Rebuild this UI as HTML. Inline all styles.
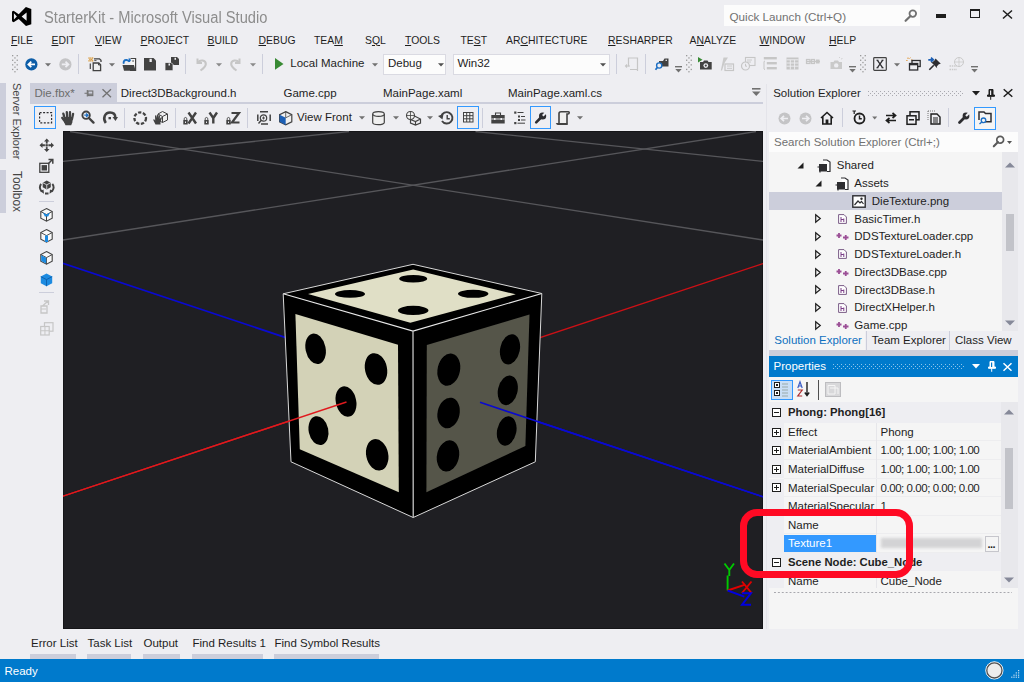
<!DOCTYPE html>
<html><head><meta charset="utf-8">
<style>
*{margin:0;padding:0;box-sizing:border-box}
html,body{width:1024px;height:682px;overflow:hidden;background:#EEEEF2;font-family:"Liberation Sans",sans-serif;color:#1E1E1E}
.a{position:absolute}
.t{position:absolute;white-space:nowrap;line-height:1}
.menu .t{font-size:10.4px;top:35.5px;color:#1E1E1E}
.menu u{text-decoration:underline;text-underline-offset:1.3px;text-decoration-thickness:1px}
.sep{position:absolute;width:1px;background:#CCCEDB}
.ui{font-size:11.5px}
svg{position:absolute;overflow:visible}
</style></head><body>

<!-- TITLE BAR -->
<svg style="left:8px;top:4px" width="28" height="26" viewBox="8 4 28 26"><path d="M25.9 7 L31.3 9 L31.3 24.2 L26 26.1 L18.7 18.9 L13.6 22.2 L12 21.3 L12 11.6 L13.6 10.7 L18.7 14.3 Z M13.9 13.3 L13.9 19.5 L16.9 16.4 Z M26.6 12.6 L21.6 16.6 L26.6 20.8 Z" fill="#000" fill-rule="evenodd"/></svg>
<div class="t" style="left:43.6px;top:9.5px;font-size:15.8px;color:#8D8D8D;transform:scaleX(0.93);transform-origin:0 0">StarterKit - Microsoft Visual Studio</div>

<div class="a" style="left:724px;top:5px;width:196px;height:21px;background:#FCFCFC"></div>
<div class="t" style="left:729.5px;top:11px;font-size:11.7px;color:#717171">Quick Launch (Ctrl+Q)</div>
<svg style="left:904px;top:9px" width="14" height="13" viewBox="0 0 14 13"><circle cx="8.8" cy="4.6" r="3.3" fill="none" stroke="#717171" stroke-width="1.8"/><path d="M6.5 7 L1.6 11.8" stroke="#717171" stroke-width="2.2" stroke-linecap="round"/></svg>
<div class="a" style="left:936px;top:14px;width:10px;height:3.5px;background:#1E1E1E"></div>
<div class="a" style="left:970px;top:8.5px;width:9.5px;height:9.5px;border:1.3px solid #1E1E1E;border-top-width:2.6px"></div>
<svg style="left:1002px;top:9.5px" width="11" height="9" viewBox="0 0 11 9"><path d="M1 0.5 L10 8.5 M10 0.5 L1 8.5" stroke="#1E1E1E" stroke-width="1.5"/></svg>

<!-- MENU -->
<div class="menu">
<div class="t" style="left:11px"><u>F</u>ILE</div>
<div class="t" style="left:51.5px"><u>E</u>DIT</div>
<div class="t" style="left:95px"><u>V</u>IEW</div>
<div class="t" style="left:140.5px"><u>P</u>ROJECT</div>
<div class="t" style="left:207.5px"><u>B</u>UILD</div>
<div class="t" style="left:258.5px"><u>D</u>EBUG</div>
<div class="t" style="left:314px">TEA<u>M</u></div>
<div class="t" style="left:365px">S<u>Q</u>L</div>
<div class="t" style="left:405px"><u>T</u>OOLS</div>
<div class="t" style="left:460.5px">TE<u>S</u>T</div>
<div class="t" style="left:506px">AR<u>C</u>HITECTURE</div>
<div class="t" style="left:608px"><u>R</u>ESHARPER</div>
<div class="t" style="left:689.5px">A<u>N</u>ALYZE</div>
<div class="t" style="left:759.5px"><u>W</u>INDOW</div>
<div class="t" style="left:829px"><u>H</u>ELP</div>
</div>

<!-- TOOLBAR ROW -->

<!-- DOC TABS -->
<div class="a" style="left:30px;top:83px;width:87px;height:19px;background:#CCCEDB"></div>
<div class="a" style="left:30px;top:102px;width:733px;height:2px;background:#CCCEDB"></div>
<div class="t ui" style="left:34.5px;top:87.5px;color:#6D6D6D">Die.fbx*</div>
<div class="t ui" style="left:120.8px;top:87.5px">Direct3DBackground.h</div>
<div class="t ui" style="left:283.5px;top:87.5px">Game.cpp</div>
<div class="t ui" style="left:383px;top:87.5px">MainPage.xaml</div>
<div class="t ui" style="left:508px;top:87.5px">MainPage.xaml.cs</div>

<!-- LEFT STRIP -->
<div class="a" style="left:0;top:83px;width:6px;height:76px;background:#CCCEDB"></div>
<div class="a" style="left:0;top:170px;width:6px;height:42.5px;background:#CCCEDB"></div>


<svg style="left:11.5px;top:54.5px" width="6" height="18" viewBox="0 0 6 18"><rect x="0" y="0.0" width="1.3" height="1.3" fill="#9A9A9A"/><rect x="4.6" y="0.0" width="1.3" height="1.3" fill="#9A9A9A"/><rect x="2.3" y="2.3" width="1.3" height="1.3" fill="#9A9A9A"/><rect x="0" y="4.6" width="1.3" height="1.3" fill="#9A9A9A"/><rect x="4.6" y="4.6" width="1.3" height="1.3" fill="#9A9A9A"/><rect x="2.3" y="6.9" width="1.3" height="1.3" fill="#9A9A9A"/><rect x="0" y="9.2" width="1.3" height="1.3" fill="#9A9A9A"/><rect x="4.6" y="9.2" width="1.3" height="1.3" fill="#9A9A9A"/><rect x="2.3" y="11.5" width="1.3" height="1.3" fill="#9A9A9A"/><rect x="0" y="13.8" width="1.3" height="1.3" fill="#9A9A9A"/><rect x="4.6" y="13.8" width="1.3" height="1.3" fill="#9A9A9A"/><rect x="2.3" y="16.1" width="1.3" height="1.3" fill="#9A9A9A"/></svg>
<svg style="left:25px;top:57.5px" width="13" height="13" viewBox="0 0 13 13"><circle cx="6.4" cy="6.4" r="6.1" fill="#0E5EA8"/><path d="M10 6.4 L3.6 6.4 M6.3 3.6 L3.4 6.4 L6.3 9.2" stroke="#fff" stroke-width="1.8" fill="none"/></svg>
<svg style="left:45px;top:62.7px" width="6" height="4" viewBox="0 0 6 4"><path d="M0 0.3 L6 0.3 L3 3.5Z" fill="#717171"/></svg>
<svg style="left:58.8px;top:57.6px" width="13" height="13" viewBox="0 0 13 13"><circle cx="6.4" cy="6.4" r="6.1" fill="#C4C4C6"/><path d="M2.8 6.4 L9.2 6.4 M6.5 3.6 L9.4 6.4 L6.5 9.2" stroke="#EEEEF2" stroke-width="1.8" fill="none"/></svg>
<div class="a" style="left:78.3px;top:54px;width:1px;height:19.5px;background:#CCCEDB"></div>
<svg style="left:87.5px;top:56.5px" width="15" height="15" viewBox="0 0 15 15"><g fill="#D8952F"><rect x="0.4" y="0.4" width="1.3" height="1.3"/><rect x="2.2" y="0.4" width="1.3" height="1.3"/><rect x="4" y="0.4" width="1.3" height="1.3"/><rect x="1.3" y="1.8" width="1.3" height="1.3"/><rect x="3.1" y="1.8" width="1.3" height="1.3"/><rect x="0.4" y="3.2" width="1.3" height="1.3"/><rect x="2.2" y="3.2" width="1.3" height="1.3"/><rect x="4" y="3.2" width="1.3" height="1.3"/></g><path d="M6 1.8 L11.5 1.8 L13 3.3 L13 5" fill="none" stroke="#424242" stroke-width="1.3"/><path d="M6.3 3.6 L8.5 3.6" stroke="#424242" stroke-width="0.9"/><path d="M2.3 6.5 L2.3 12" stroke="#424242" stroke-width="1.2"/><path d="M5.2 6 L10.8 6 L12.6 7.8 L12.6 13.7 L5.2 13.7 Z" fill="#F0F0F0" stroke="#424242" stroke-width="1.3"/><path d="M10.5 6 L10.5 8 L12.6 8" fill="none" stroke="#424242" stroke-width="1"/></svg>
<svg style="left:109px;top:62.8px" width="6" height="4" viewBox="0 0 6 4"><path d="M0 0.3 L6 0.3 L3 3.5Z" fill="#717171"/></svg>
<svg style="left:121.5px;top:56.5px" width="15" height="15" viewBox="0 0 15 15"><path d="M8.5 1.5 L13.6 1.5 L13.6 13.5 L8 13.5" fill="#F5F5F5" stroke="#424242" stroke-width="1.2"/><path d="M10.2 4 L12 4" stroke="#424242" stroke-width="1"/><path d="M0.5 8 L12 8 L13.6 13.7 L2 13.7 Z" fill="#424242"/><path d="M1.8 6.8 C1.2 4.5 2.2 2.8 4.5 3 C6 3.1 6.3 4.5 8 3.8" fill="none" stroke="#1C6FC4" stroke-width="1.9"/><path d="M6.8 0.8 L9.3 3.2 L6.3 5.2 Z" fill="#1C6FC4"/></svg>
<svg style="left:144px;top:57.5px" width="12" height="13" viewBox="0 0 12 13"><path d="M0 0 L9.5 0 L12 2.5 L12 12.5 L0 12.5Z" fill="#424242"/><rect x="5.5" y="0.8" width="2.3" height="3.2" fill="#EEEEF2"/></svg>
<svg style="left:164.8px;top:56.8px" width="14" height="14" viewBox="0 0 14 14"><path d="M6 0 L12 0 L14 2 L14 8 L6 8Z" fill="#424242"/><rect x="9.5" y="0.8" width="1.5" height="2" fill="#EEEEF2"/><path d="M0 5.5 L6 5.5 L8 7.5 L8 13.7 L0 13.7Z" fill="#424242" stroke="#EEEEF2" stroke-width="0.8"/><rect x="3.5" y="6.5" width="1.5" height="2" fill="#EEEEF2"/></svg>
<div class="a" style="left:185.3px;top:54px;width:1px;height:19.5px;background:#CCCEDB"></div>
<svg style="left:195px;top:57px" width="12" height="14" viewBox="0 0 12 14"><path d="M2.5 1.5 L2.5 6 L7 6" fill="none" stroke="#C6C6C6" stroke-width="2"/><path d="M2.8 5.5 C5 2.5 10.8 2.8 10.8 7 C10.8 9.5 8.5 11.5 5.5 13.5" fill="none" stroke="#C6C6C6" stroke-width="2.1"/></svg>
<svg style="left:216px;top:62.8px" width="6" height="4" viewBox="0 0 6 4"><path d="M0 0.3 L6 0.3 L3 3.5Z" fill="#8A8A8A"/></svg>
<svg style="left:229.5px;top:57px" width="12" height="14" viewBox="0 0 12 14"><path d="M9.5 1.5 L9.5 6 L5 6" fill="none" stroke="#C6C6C6" stroke-width="2"/><path d="M9.2 5.5 C7 2.5 1.2 2.8 1.2 7 C1.2 9.5 3.5 11.5 6.5 13.5" fill="none" stroke="#C6C6C6" stroke-width="2.1"/></svg>
<svg style="left:250.3px;top:62.8px" width="6" height="4" viewBox="0 0 6 4"><path d="M0 0.3 L6 0.3 L3 3.5Z" fill="#8A8A8A"/></svg>
<div class="a" style="left:262.1px;top:54px;width:1px;height:19.5px;background:#CCCEDB"></div>
<svg style="left:274.5px;top:57.6px" width="9" height="12" viewBox="0 0 9 12"><path d="M0 0 L8.5 5.9 L0 11.8Z" fill="#388A34"/></svg>
<div class="t ui" style="left:290.3px;top:57.5px">Local Machine</div>
<svg style="left:372.3px;top:62.8px" width="6" height="4" viewBox="0 0 6 4"><path d="M0 0.3 L6 0.3 L3 3.5Z" fill="#717171"/></svg>
<div class="a" style="left:383.4px;top:53.5px;width:63.1px;height:21px;background:#FCFCFC;border:1px solid #DADAE2"></div>
<div class="t ui" style="left:388px;top:57.5px">Debug</div>
<svg style="left:437.7px;top:62.8px" width="6" height="4" viewBox="0 0 6 4"><path d="M0 0.3 L6 0.3 L3 3.5Z" fill="#505050"/></svg>
<div class="a" style="left:452.9px;top:53.5px;width:157px;height:21px;background:#FCFCFC;border:1px solid #DADAE2"></div>
<div class="t ui" style="left:457.4px;top:57.5px">Win32</div>
<svg style="left:600.4px;top:62.8px" width="6" height="4" viewBox="0 0 6 4"><path d="M0 0.3 L6 0.3 L3 3.5Z" fill="#505050"/></svg>
<div class="a" style="left:615.9px;top:54px;width:1px;height:19.5px;background:#CCCEDB"></div>
<svg style="left:624.5px;top:56.5px" width="14" height="15" viewBox="0 0 14 15"><path d="M3.5 9.5 L3.5 1 L12.5 1 L12.5 14" fill="none" stroke="#C6C6C6" stroke-width="1.2"/><path d="M0.5 9 L5 9 M2 7.5 L0.5 9 L2 10.5 M5 12.5 L13 12.5" stroke="#C6C6C6" stroke-width="1.1" fill="none"/></svg>
<div class="a" style="left:645.1px;top:54px;width:1px;height:19.5px;background:#CCCEDB"></div>
<svg style="left:654.5px;top:56.5px" width="14" height="14" viewBox="0 0 14 14"><path d="M4 4 L8 4 L9.5 1.5 L13.5 1.5 L13.5 9.5 L4 9.5Z" fill="#424242"/><rect x="10.5" y="2.7" width="1.5" height="1.2" fill="#EEEEF2"/><circle cx="4.2" cy="8.5" r="2.6" fill="#EEEEF2" stroke="#1C6FC4" stroke-width="1.4"/><path d="M2.5 10.3 L0.5 12.8" stroke="#1C6FC4" stroke-width="1.8"/></svg>
<svg style="left:675.2px;top:65.6px" width="7" height="7" viewBox="0 0 7 7"><rect x="0" y="0" width="7" height="1.4" fill="#717171"/><path d="M0.3 3 L6.7 3 L3.5 6.5Z" fill="#717171"/></svg>
<svg style="left:686px;top:54.5px" width="6" height="18" viewBox="0 0 6 18"><rect x="0" y="0.0" width="1.3" height="1.3" fill="#9A9A9A"/><rect x="4.6" y="0.0" width="1.3" height="1.3" fill="#9A9A9A"/><rect x="2.3" y="2.3" width="1.3" height="1.3" fill="#9A9A9A"/><rect x="0" y="4.6" width="1.3" height="1.3" fill="#9A9A9A"/><rect x="4.6" y="4.6" width="1.3" height="1.3" fill="#9A9A9A"/><rect x="2.3" y="6.9" width="1.3" height="1.3" fill="#9A9A9A"/><rect x="0" y="9.2" width="1.3" height="1.3" fill="#9A9A9A"/><rect x="4.6" y="9.2" width="1.3" height="1.3" fill="#9A9A9A"/><rect x="2.3" y="11.5" width="1.3" height="1.3" fill="#9A9A9A"/><rect x="0" y="13.8" width="1.3" height="1.3" fill="#9A9A9A"/><rect x="4.6" y="13.8" width="1.3" height="1.3" fill="#9A9A9A"/><rect x="2.3" y="16.1" width="1.3" height="1.3" fill="#9A9A9A"/></svg>
<svg style="left:697.5px;top:56.5px" width="14" height="14" viewBox="0 0 14 14"><path d="M0 0 L4.5 2.8 L0 5.6Z" fill="#388A34"/><path d="M2 5 L5 5 L6 3.5 L9.5 3.5 L10.5 5 L13.7 5 L13.7 12.5 L2 12.5Z" fill="#424242"/><circle cx="7.8" cy="8.6" r="2.4" fill="#EEEEF2"/><circle cx="7.8" cy="8.6" r="1.1" fill="#424242"/></svg>
<svg style="left:720px;top:56.5px" width="14" height="14" viewBox="0 0 14 14"><path d="M3.5 0.5 L8 0.5 L4.5 6 L2 13.5 L0.8 13.5 Z" fill="#CACACA"/><rect x="5" y="7" width="8.5" height="6.5" fill="none" stroke="#C6C6C6" stroke-width="1.2"/><path d="M7 9 L12 9 M7 11.3 L12 11.3" stroke="#C6C6C6" stroke-width="0.9"/></svg>
<svg style="left:740.6px;top:56.5px" width="15" height="14" viewBox="0 0 15 14"><rect x="4.5" y="0.5" width="9.5" height="8" fill="#EEEEF2" stroke="#C6C6C6" stroke-width="1.1"/><path d="M6 3 L11 3 M6 5 L10 5" stroke="#C6C6C6" stroke-width="0.9"/><circle cx="4.5" cy="9" r="4" fill="#EEEEF2" stroke="#C6C6C6" stroke-width="1.2"/><path d="M4.5 6.8 L4.5 9.2 L6 9.2" stroke="#C6C6C6" stroke-width="1" fill="none"/></svg>
<svg style="left:763px;top:56.5px" width="14" height="14" viewBox="0 0 14 14"><rect x="0.8" y="0" width="13" height="2.4" fill="#C6C6C6"/><rect x="3.8" y="5" width="10" height="2.4" fill="#C6C6C6"/><rect x="3.8" y="10" width="10" height="2.4" fill="#C6C6C6"/><path d="M2 4 L1 4.5 L1 12 L2 12.7" stroke="#C6C6C6" stroke-width="1" fill="none"/></svg>
<svg style="left:785.5px;top:57px" width="13" height="13" viewBox="0 0 13 13"><rect x="0.5" y="0.5" width="12" height="12" fill="#C6C6C6"/><path d="M0.5 2.8 L12.5 2.8 M0.5 6 L12.5 6 M0.5 9.2 L12.5 9.2 M4.3 2.8 L4.3 12.5 M8.6 2.8 L8.6 12.5" stroke="#EEEEF2" stroke-width="0.9"/></svg>
<svg style="left:806px;top:59px" width="14" height="5" viewBox="0 0 14 5"><path d="M0 2.5 L14 2.5" stroke="#C6C6C6" stroke-width="1.4"/><rect x="0.5" y="0.5" width="3.5" height="4" fill="none" stroke="#C6C6C6" stroke-width="1.2"/><rect x="5.5" y="0.5" width="3" height="4" fill="none" stroke="#C6C6C6" stroke-width="1.2"/><rect x="10" y="0.5" width="3.5" height="4" fill="#C6C6C6"/></svg>
<svg style="left:829.5px;top:57px" width="13" height="13" viewBox="0 0 13 13"><path d="M0.5 5 L3.5 5 L4.5 3.5 L8 3.5 L9 5 L12 5 L12 12 L0.5 12Z" fill="#CACACA"/><circle cx="6.2" cy="8.4" r="2.2" fill="#EEEEF2"/><path d="M9 1 L10 0 M11 2 L12.5 1.5" stroke="#CACACA" stroke-width="0.8"/></svg>
<svg style="left:849px;top:66px" width="7" height="7" viewBox="0 0 7 7"><rect x="0" y="0" width="7" height="1.4" fill="#717171"/><path d="M0.3 3 L6.7 3 L3.5 6.5Z" fill="#717171"/></svg>
<svg style="left:860px;top:54.5px" width="6" height="18" viewBox="0 0 6 18"><rect x="0" y="0.0" width="1.3" height="1.3" fill="#9A9A9A"/><rect x="4.6" y="0.0" width="1.3" height="1.3" fill="#9A9A9A"/><rect x="2.3" y="2.3" width="1.3" height="1.3" fill="#9A9A9A"/><rect x="0" y="4.6" width="1.3" height="1.3" fill="#9A9A9A"/><rect x="4.6" y="4.6" width="1.3" height="1.3" fill="#9A9A9A"/><rect x="2.3" y="6.9" width="1.3" height="1.3" fill="#9A9A9A"/><rect x="0" y="9.2" width="1.3" height="1.3" fill="#9A9A9A"/><rect x="4.6" y="9.2" width="1.3" height="1.3" fill="#9A9A9A"/><rect x="2.3" y="11.5" width="1.3" height="1.3" fill="#9A9A9A"/><rect x="0" y="13.8" width="1.3" height="1.3" fill="#9A9A9A"/><rect x="4.6" y="13.8" width="1.3" height="1.3" fill="#9A9A9A"/><rect x="2.3" y="16.1" width="1.3" height="1.3" fill="#9A9A9A"/></svg>
<svg style="left:872.8px;top:56.8px" width="14" height="14" viewBox="0 0 14 14"><rect x="0.7" y="0.7" width="12.6" height="12.6" rx="0.8" fill="none" stroke="#424242" stroke-width="1.2"/><path d="M4.3 3.2 L9.7 10.8 M9.7 3.2 L4.3 10.8" stroke="#2D2D30" stroke-width="1.3"/><path d="M3.3 3.2 L5.5 3.2 M8.5 3.2 L10.7 3.2 M3.3 10.8 L5.5 10.8 M8.5 10.8 L10.7 10.8" stroke="#2D2D30" stroke-width="0.8"/></svg>
<svg style="left:893.9px;top:63px" width="6" height="4" viewBox="0 0 6 4"><path d="M0 0.3 L6 0.3 L3 3.5Z" fill="#717171"/></svg>
<svg style="left:905.8px;top:56.5px" width="15" height="14" viewBox="0 0 15 14"><path d="M2 0.5 L2 2 M0.3 3.5 L1.5 3.5 M3.5 1.5 L4.5 0.7 M5 3 L6.5 3" stroke="#E0922F" stroke-width="1"/><rect x="6" y="3.5" width="8.2" height="6" fill="#EEEEF2" stroke="#2D2D30" stroke-width="1.3"/><rect x="3.5" y="6.5" width="8.2" height="6.5" fill="#EEEEF2" stroke="#2D2D30" stroke-width="1.3"/><rect x="3.5" y="6.5" width="8.2" height="1.8" fill="#2D2D30"/></svg>
<svg style="left:927.5px;top:56.5px" width="14" height="14" viewBox="0 0 14 14"><path d="M0.3 2.8 L5 2.8 M3 0.6 L5.3 2.8 L3 5" stroke="#1C5FB5" stroke-width="1.7" fill="none"/><path d="M7.5 1.5 L12.8 6.8 L10.8 7.3 L8.8 9.6 L9.2 11.3 L2.7 4.8 L4.4 5.2 L6.7 3.2 Z" fill="#2D2D30"/><path d="M5.8 8.2 L1.3 12.7" stroke="#2D2D30" stroke-width="1.6"/></svg>
<svg style="left:949px;top:56.5px" width="15" height="14" viewBox="0 0 15 14"><circle cx="10" cy="5" r="4.5" fill="none" stroke="#CACACA" stroke-width="1"/><path d="M5.5 5 L14.5 5 M10 0.5 L10 9.5" stroke="#CACACA" stroke-width="0.8"/><path d="M0.5 9 L8 9 M0.5 12.5 L8 12.5" stroke="#CACACA" stroke-width="1.5" stroke-dasharray="1.5 0.8"/></svg>
<svg style="left:970.9px;top:66px" width="7" height="7" viewBox="0 0 7 7"><rect x="0" y="0" width="7" height="1.4" fill="#717171"/><path d="M0.3 3 L6.7 3 L3.5 6.5Z" fill="#717171"/></svg>
<div class="a" style="left:34.3px;top:106.3px;width:21.5px;height:23.1px;border:1px solid #3399FF"></div>
<svg style="left:38.8px;top:111.8px" width="13.2" height="11.4" viewBox="0 0 13.2 11.4"><rect x="0.6" y="0.6" width="12" height="10.2" fill="none" stroke="#2D2D30" stroke-width="1.2" stroke-dasharray="2 1.5"/></svg>
<svg style="left:60.5px;top:110.5px" width="13.5" height="14.5" viewBox="0 0 13.5 14.5"><g stroke="#424242" stroke-width="2.3" stroke-linecap="round"><path d="M2.3 2.6 L4 8"/><path d="M5.8 1.2 L6.3 7.5"/><path d="M9 1.2 L8.8 7.5"/><path d="M12.1 2.8 L11 8"/><path d="M1.2 6.8 L4 10.5"/></g><path d="M3.2 6 L12 6 L11.3 11.5 L10.2 14.2 L4.5 14.2 L3 11Z" fill="#424242"/></svg>
<svg style="left:80.5px;top:110px" width="14" height="14" viewBox="0 0 14 14"><circle cx="5.1" cy="5.2" r="3.7" fill="#EEEEF2" stroke="#424242" stroke-width="1.9"/><path d="M7.9 8 L12.5 12.6" stroke="#424242" stroke-width="2.4" stroke-linecap="round"/><path d="M3.3 5.2 L6.9 5.2 M5.1 3.4 L7 5.2 L5.1 7" stroke="#1C6FC4" stroke-width="1.3" fill="none"/></svg>
<svg style="left:102.5px;top:111px" width="15" height="13" viewBox="0 0 15 13"><path d="M2.8 12 C-0.5 7.5 1.8 1.5 7 1.5 C10.5 1.5 12.3 3.5 12.3 6.5" fill="none" stroke="#424242" stroke-width="2.5"/><path d="M9.5 6 L12.5 10 L15 6Z" fill="#424242"/><rect x="5.5" y="6" width="2.5" height="2.3" fill="#424242"/></svg>
<div class="a" style="left:123.8px;top:108px;width:1px;height:19.5px;background:#CCCEDB"></div>
<svg style="left:132.5px;top:110.5px" width="14.5" height="14.5" viewBox="0 0 14.5 14.5"><circle cx="7.2" cy="7.2" r="5.8" fill="none" stroke="#424242" stroke-width="2.3" stroke-dasharray="3.3 1.6"/></svg>
<svg style="left:153.3px;top:110.5px" width="15.5" height="14" viewBox="0 0 15.5 14"><path d="M9.5 0.5 L14.5 3 L14.5 9 L9.5 11.5 L5 9 L5 3Z M5 3 L9.5 5.5 L14.5 3 M9.5 5.5 L9.5 11.5" fill="#F0F0F0" stroke="#424242" stroke-width="1"/><path d="M2.5 13.5 L0.5 9.5 C0 8.5 1 8 1.5 8.7 L2.2 9.5 L2 5 C2 4 3.2 4 3.2 5 L3.5 7 L3.8 4.3 C3.8 3.5 5 3.5 5 4.3 L5.2 7 L5.8 4.8 C6 4 7.2 4.2 7 5 L6.8 8 L7.8 6.5 C8.2 5.8 9.2 6.2 8.9 7 L7.5 11 L7.5 13.5Z" fill="#424242"/></svg>
<div class="a" style="left:174.5px;top:108px;width:1px;height:19.5px;background:#CCCEDB"></div>
<svg style="left:182.7px;top:110.5px" width="15" height="14" viewBox="0 0 15 14"><rect x="0.3" y="9" width="4.4" height="4.5" fill="#424242"/><path d="M1.2 9 L1.2 7.8 C1.2 6 3.8 6 3.8 7.8 L3.8 9" fill="none" stroke="#424242" stroke-width="0.9"/><rect x="2" y="10.5" width="1" height="1.5" fill="#EEEEF2"/><path d="M5.5 1.5 L13 12.5 M13 1.5 L5.5 12.5" stroke="#424242" stroke-width="2.4"/></svg>
<svg style="left:204.4px;top:110.5px" width="15" height="14" viewBox="0 0 15 14"><rect x="0.3" y="9" width="4.4" height="4.5" fill="#424242"/><path d="M1.2 9 L1.2 7.8 C1.2 6 3.8 6 3.8 7.8 L3.8 9" fill="none" stroke="#424242" stroke-width="0.9"/><rect x="2" y="10.5" width="1" height="1.5" fill="#EEEEF2"/><path d="M5.5 1.5 L9.3 7 L13 1.5 M9.3 7 L9.3 12.5" stroke="#424242" stroke-width="2.4" fill="none"/></svg>
<svg style="left:226.3px;top:110.5px" width="15" height="14" viewBox="0 0 15 14"><rect x="0.3" y="9" width="4.4" height="4.5" fill="#424242"/><path d="M1.2 9 L1.2 7.8 C1.2 6 3.8 6 3.8 7.8 L3.8 9" fill="none" stroke="#424242" stroke-width="0.9"/><rect x="2" y="10.5" width="1" height="1.5" fill="#EEEEF2"/><path d="M5.5 2 L13 2 L6 11.5 L13.5 11.5" stroke="#424242" stroke-width="2.2" fill="none"/></svg>
<div class="a" style="left:246.8px;top:108px;width:1px;height:19.5px;background:#CCCEDB"></div>
<svg style="left:256.5px;top:110.5px" width="14" height="14" viewBox="0 0 14 14"><path d="M3 0.8 L11 0.8 M0.8 3.5 L0.8 10 M13.2 3.5 L13.2 10 M4 13 L11 13" stroke="#424242" stroke-width="1.5"/><circle cx="6.5" cy="7" r="3.2" fill="none" stroke="#424242" stroke-width="1.2"/><path d="M5 7 L8 7 M6.5 5.5 L6.5 8.5" stroke="#424242" stroke-width="0.9"/><path d="M4.3 9.3 L1.5 12.5" stroke="#424242" stroke-width="1.4"/></svg>
<svg style="left:278.5px;top:110.5px" width="13.5" height="14.5" viewBox="0 0 13.5 14.5"><path d="M6.7 0.6 L12.8 3.7 L12.8 10.8 L6.7 13.9 L0.6 10.8 L0.6 3.7Z" fill="#F0F0F0" stroke="#424242" stroke-width="1.2"/><path d="M0.6 3.7 L6.7 6.8 L6.7 13.9 L0.6 10.8Z" fill="#1C5FB5"/><path d="M6.7 6.8 L12.8 3.7 M6.7 0.6 L6.7 6.8" stroke="#424242" stroke-width="0.8"/></svg>
<div class="t ui" style="left:297.1px;top:111.5px">View Front</div>
<svg style="left:358.7px;top:116.3px" width="6" height="4" viewBox="0 0 6 4"><path d="M0 0.3 L6 0.3 L3 3.5Z" fill="#717171"/></svg>
<svg style="left:372.3px;top:110.5px" width="13" height="14.5" viewBox="0 0 13 14.5"><path d="M0.7 3 L0.7 11.5 C0.7 14.3 12.3 14.3 12.3 11.5 L12.3 3" fill="#F0F0F0" stroke="#424242" stroke-width="1.2"/><ellipse cx="6.5" cy="3" rx="5.8" ry="2.4" fill="#F0F0F0" stroke="#424242" stroke-width="1.2"/></svg>
<svg style="left:392.8px;top:116.3px" width="6" height="4" viewBox="0 0 6 4"><path d="M0 0.3 L6 0.3 L3 3.5Z" fill="#717171"/></svg>
<svg style="left:405.8px;top:110.5px" width="15" height="14.5" viewBox="0 0 15 14.5"><circle cx="4.5" cy="4.5" r="4" fill="#F0F0F0" stroke="#424242" stroke-width="1.1"/><path d="M0.5 4.5 L8.5 4.5 M4.5 0.5 L4.5 8.5" stroke="#424242" stroke-width="0.8"/><path d="M8.5 5 L14.5 8 L14.5 12 L9.5 14 L4.5 12 L4.5 8.5 M4.5 8.5 L9.5 10.5 L14.5 8 M9.5 10.5 L9.5 14" fill="none" stroke="#424242" stroke-width="1.2"/></svg>
<svg style="left:427px;top:116.3px" width="6" height="4" viewBox="0 0 6 4"><path d="M0 0.3 L6 0.3 L3 3.5Z" fill="#717171"/></svg>
<svg style="left:438px;top:110.5px" width="15.5" height="14.5" viewBox="0 0 15.5 14.5"><path d="M3.2 5.5 A5.7 5.7 0 1 1 4 10" fill="none" stroke="#424242" stroke-width="1.9"/><path d="M0 5 L4.5 8.5 L5.5 3 Z" fill="#424242"/><path d="M9.2 4 L9.2 7.8 L11.8 7.8" stroke="#424242" stroke-width="1.4" fill="none"/></svg>
<div class="a" style="left:457px;top:106.3px;width:21.7px;height:23.1px;border:1px solid #3399FF"></div>
<svg style="left:462.8px;top:112.3px" width="10.5" height="10.5" viewBox="0 0 10.5 10.5"><rect x="0.5" y="0.5" width="9.5" height="9.5" fill="#F5F5F5" stroke="#424242" stroke-width="1"/><path d="M3.7 0.5 L3.7 10 M6.8 0.5 L6.8 10 M0.5 3.7 L10 3.7 M0.5 6.8 L10 6.8" stroke="#424242" stroke-width="1"/></svg>
<div class="a" style="left:481.9px;top:108px;width:1px;height:19.5px;background:#CCCEDB"></div>
<svg style="left:490.8px;top:111.5px" width="14" height="12" viewBox="0 0 14 12"><path d="M4.5 3 L4.5 1 L9.5 1 L9.5 3" fill="none" stroke="#424242" stroke-width="1.1"/><rect x="0.3" y="3" width="13.4" height="8.5" fill="#424242"/><path d="M0.3 7 L13.7 7" stroke="#EEEEF2" stroke-width="0.9"/><rect x="3" y="6" width="1.5" height="2" fill="#EEEEF2"/><rect x="9.5" y="6" width="1.5" height="2" fill="#EEEEF2"/></svg>
<svg style="left:513.6px;top:110.5px" width="12" height="14" viewBox="0 0 12 14"><rect x="0.2" y="0.5" width="2.2" height="2.2" fill="#424242"/><rect x="4" y="4.5" width="2" height="2" fill="#424242"/><rect x="4" y="8" width="2" height="2" fill="#424242"/><rect x="0.2" y="11" width="2.2" height="2.2" fill="#424242"/><path d="M3.5 1.5 L9.5 1.5 M7 5.5 L11 5.5 M7 9 L11.5 9 M3.5 12.2 L11 12.2" stroke="#424242" stroke-width="1"/></svg>
<div class="a" style="left:529.9px;top:106.3px;width:21.1px;height:23.1px;border:1px solid #3399FF"></div>
<svg style="left:534.8px;top:111.5px" width="11.5" height="11.5" viewBox="0 0 11.5 11.5"><path d="M1.2 10.3 L5.5 6" stroke="#2D2D30" stroke-width="2.6" stroke-linecap="round"/><circle cx="7.6" cy="4" r="3.6" fill="#2D2D30"/><path d="M7.8 3.8 L11.5 0" stroke="#EEEEF2" stroke-width="2.2"/></svg>
<svg style="left:556.3px;top:110.5px" width="14" height="14" viewBox="0 0 14 14"><path d="M3 12.5 L3 2.5 C3 1 4 0.8 5 0.8 L12.5 0.8 C13.5 0.8 13.5 3 12 3 L11 3 L11 12.5" fill="#F0F0F0" stroke="#424242" stroke-width="1.6"/><path d="M0.5 12.5 L11 12.5 C12 12.5 12 13.5 11 13.5 L1.5 13.5 C0.5 13.5 0.3 12.5 0.5 12.5Z" fill="#424242" stroke="#424242" stroke-width="1"/></svg>
<svg style="left:576.8px;top:116.3px" width="6" height="4" viewBox="0 0 6 4"><path d="M0 0.3 L6 0.3 L3 3.5Z" fill="#717171"/></svg>
<svg style="left:38.5px;top:137.5px" width="15.5" height="14.5" viewBox="0 0 15.5 14.5"><path d="M7.75 0.5 L10.5 3.5 L5 3.5Z M7.75 14 L10.5 11 L5 11Z M0.5 7.25 L3.5 4.5 L3.5 10Z M15 7.25 L12 4.5 L12 10Z" fill="#424242"/><path d="M7.75 3 L7.75 11.5 M3 7.25 L12.5 7.25" stroke="#424242" stroke-width="1.8"/><path d="M6.3 5.8 L9.2 5.8 L9.2 8.7 L6.3 8.7Z" fill="none" stroke="#EEEEF2" stroke-width="0.5"/></svg>
<svg style="left:39px;top:159px" width="14.5" height="14" viewBox="0 0 14.5 14"><rect x="0.8" y="4.3" width="9" height="9" fill="none" stroke="#424242" stroke-width="1.3"/><rect x="2.6" y="6.1" width="5.4" height="5.4" fill="#424242"/><path d="M9 5 L13.5 0.5 M9.5 0.5 L13.8 0.5 L13.8 4.8" stroke="#424242" stroke-width="1.5" fill="none"/></svg>
<svg style="left:38.5px;top:180.3px" width="15.5" height="15" viewBox="0 0 15.5 15"><path d="M7.75 0.6 L11.8 2.7 L11.8 7.3 L7.75 9.4 L3.7 7.3 L3.7 2.7Z" fill="#424242"/><path d="M3.7 2.7 L7.75 4.8 L11.8 2.7 M7.75 4.8 L7.75 9.4" stroke="#EEEEF2" stroke-width="0.8" fill="none"/><path d="M2.2 4 C0.2 6 0.4 9.5 3 11.5 M13.3 4 C15.3 6 15.1 9.5 12.5 11.5" stroke="#424242" stroke-width="2" fill="none"/><path d="M1 11 L5 13.8 L4.5 9.5Z M14.5 11 L10.5 13.8 L11 9.5Z" fill="#424242"/><path d="M6 13.5 L9.5 13.5" stroke="#424242" stroke-width="2"/></svg>
<div class="a" style="left:38.5px;top:200.5px;width:15.5px;height:1px;background:#CCCEDB"></div>
<svg style="left:39.5px;top:207.7px" width="13" height="14" viewBox="0 0 13 14"><path d="M6.5 0.6 L12.2 3.6 L12.2 10.2 L6.5 13.2 L0.8 10.2 L0.8 3.6Z" fill="#F8F8F8" stroke="#424242" stroke-width="1.1"/><path d="M0.8 3.6 L6.5 6.6 L12.2 3.6 M6.5 6.6 L6.5 13.2" stroke="#424242" stroke-width="0.9" fill="none"/><path d="M3 4.5 L6.5 6.4 L10 4.5 L8.2 8.5 L4.8 8.5Z" fill="#1C8AE0"/><path d="M6.5 8.5 L6.5 13" stroke="#424242" stroke-width="1"/></svg>
<svg style="left:39.5px;top:229.2px" width="13" height="14" viewBox="0 0 13 14"><path d="M6.5 0.6 L12.2 3.6 L12.2 10.2 L6.5 13.2 L0.8 10.2 L0.8 3.6Z" fill="#F8F8F8" stroke="#424242" stroke-width="1.1"/><path d="M0.8 3.6 L6.5 6.6 L12.2 3.6 M6.5 6.6 L6.5 13.2" stroke="#424242" stroke-width="0.9" fill="none"/><rect x="5" y="6.5" width="3" height="6.5" fill="#1C8AE0"/></svg>
<svg style="left:39.5px;top:250.8px" width="13" height="14" viewBox="0 0 13 14"><path d="M6.5 0.6 L12.2 3.6 L12.2 10.2 L6.5 13.2 L0.8 10.2 L0.8 3.6Z" fill="#F8F8F8" stroke="#424242" stroke-width="1.1"/><path d="M0.8 3.6 L6.5 6.6 L12.2 3.6 M6.5 6.6 L6.5 13.2" stroke="#424242" stroke-width="0.9" fill="none"/><path d="M1.2 4.2 L6.2 6.8 L6.2 12.6 L1.2 10Z" fill="#1C8AE0"/></svg>
<svg style="left:39.5px;top:273px" width="13" height="14" viewBox="0 0 13 14"><path d="M6.5 0.6 L12.2 3.6 L12.2 10.2 L6.5 13.2 L0.8 10.2 L0.8 3.6Z" fill="#1C8AE0"/><path d="M0.8 3.6 L6.5 6.6 L12.2 3.6 M6.5 6.6 L6.5 13.2" stroke="#0E5EA8" stroke-width="0.9" fill="none"/></svg>
<div class="a" style="left:38.5px;top:292.3px;width:15.5px;height:1px;background:#CCCEDB"></div>
<svg style="left:39.5px;top:300px" width="14" height="14" viewBox="0 0 14 14"><path d="M1 6 L7 6 L7 13 L1 13Z M2.5 6 L8 1 M4 1 L8.5 1 L8.5 5" fill="none" stroke="#C6C6C6" stroke-width="1.3"/><path d="M1 9 L6 9" stroke="#C6C6C6" stroke-width="1"/></svg>
<svg style="left:39.5px;top:321.5px" width="14" height="14" viewBox="0 0 14 14"><rect x="4.5" y="0.7" width="8.5" height="8.5" fill="none" stroke="#C6C6C6" stroke-width="1.2"/><rect x="0.7" y="4.5" width="8.5" height="8.5" fill="#EEEEF2" stroke="#C6C6C6" stroke-width="1.2"/><path d="M4.95 4.5 L4.95 13 M0.7 8.75 L9.2 8.75" stroke="#C6C6C6" stroke-width="1"/></svg>
<div class="t ui" style="left:10.5px;top:83px;writing-mode:vertical-rl;color:#444;font-size:11px">Server Explorer</div>
<div class="t ui" style="left:10.5px;top:171.4px;writing-mode:vertical-rl;color:#444;font-size:11.9px">Toolbox</div>
<svg style="left:83.5px;top:89px" width="9.5" height="8.5" viewBox="0 0 9.5 8.5"><path d="M0.5 4.3 L3 4.3 M3.3 1 L3.3 7.6" stroke="#717171" stroke-width="1.1" fill="none"/><rect x="4" y="2" width="4.8" height="4.6" fill="none" stroke="#717171" stroke-width="1.1"/><rect x="4" y="4.6" width="4.8" height="1.2" fill="#717171"/></svg>
<svg style="left:102px;top:89px" width="9.5" height="8.5" viewBox="0 0 9.5 8.5"><path d="M0.5 0.3 L9 8.2 M9 0.3 L0.5 8.2" stroke="#717171" stroke-width="1.3"/></svg>
<svg style="left:752px;top:88px" width="8.5" height="8.5" viewBox="0 0 8.5 8.5"><rect x="0" y="0" width="8.5" height="1.6" fill="#717171"/><path d="M0 3.5 L8.5 3.5 L4.25 8Z" fill="#717171"/></svg>
<!-- VIEWPORT -->
<div class="a" style="left:63px;top:131px;width:700px;height:497.5px;background:#1F1F23;overflow:hidden;box-shadow:inset 1px 1px 0 #151518,inset -1px -1px 0 #151518">
<svg style="left:0;top:0" width="700" height="498" viewBox="63 131 700 498">
<g stroke="#56565A" stroke-width="1.3" fill="none">
<line x1="63" y1="161.4" x2="349" y2="131.5"/>
<line x1="475.5" y1="131.5" x2="763" y2="161.4"/>
<line x1="70" y1="131.5" x2="763" y2="240"/>
<line x1="63" y1="240" x2="756" y2="131.5"/>
</g>
<line x1="63" y1="263.3" x2="763" y2="496.8" stroke="#0A0ACF" stroke-width="1.7"/>
<line x1="63" y1="496.2" x2="763" y2="263.6" stroke="#CC1016" stroke-width="1.4"/>
<!-- dice -->
<defs><filter id="sb" x="-5%" y="-5%" width="110%" height="110%"><feGaussianBlur stdDeviation="0.55"/></filter></defs>
<g>
<polygon points="413,264.3 541.8,293.5 413,331.1 283.2,293.8" fill="#000"/>
<polygon points="283.2,293.8 413,331.1 413.2,517.5 291,461.8" fill="#000"/>
<polygon points="413,331.1 541.8,293.5 535.3,461.8 413.2,517.5" fill="#000"/>
<g filter="url(#sb)"><polygon points="413.2,269.6 515.7,294.3 410.3,322.7 308,293.9" fill="#E0DFC6"/>
<polygon points="295.4,313.9 398,344.7 398.8,492.2 299.8,449.3" fill="#D3D2B7"/>
<polygon points="426.8,344.9 529.5,314.6 525.4,446 426.4,492.2" fill="#54544A"/>
<g fill="#000">
<ellipse cx="413.2" cy="278.7" rx="14" ry="3.8"/>
<ellipse cx="350" cy="293.9" rx="15" ry="3.9"/>
<ellipse cx="473.2" cy="293.8" rx="15.2" ry="4"/>
<ellipse cx="413.2" cy="310.4" rx="15.2" ry="4.6"/>
<ellipse cx="315.6" cy="348.8" rx="10" ry="15.5" transform="rotate(-12 315.6 348.8)"/>
<ellipse cx="376" cy="369" rx="11" ry="16" transform="rotate(-12 376 369)"/>
<ellipse cx="346" cy="401.5" rx="10.2" ry="15.4" transform="rotate(-12 346 401.5)"/>
<ellipse cx="318.5" cy="430.6" rx="9.8" ry="14.6" transform="rotate(-12 318.5 430.6)"/>
<ellipse cx="377.2" cy="454.8" rx="11" ry="15.9" transform="rotate(-12 377.2 454.8)"/>
<ellipse cx="510" cy="349.3" rx="9.8" ry="15.3" transform="rotate(12 510 349.3)"/>
<ellipse cx="507.8" cy="390.3" rx="9.8" ry="15" transform="rotate(12 507.8 390.3)"/>
<ellipse cx="506.7" cy="431" rx="9.6" ry="14.8" transform="rotate(12 506.7 431)"/>
<ellipse cx="448.8" cy="369.7" rx="11.2" ry="16.3" transform="rotate(12 448.8 369.7)"/>
<ellipse cx="448.6" cy="413" rx="11" ry="15.5" transform="rotate(12 448.6 413)"/>
<ellipse cx="448" cy="455.9" rx="11" ry="15.7" transform="rotate(12 448 455.9)"/>
</g></g>
<g fill="none" stroke="#E8E8E8" stroke-width="1.1">
<path d="M283.2 293.8 L413 331.1 L541.8 293.5 M413 331.1 L413.2 517.5"/>
</g>
<g fill="none" stroke="#D8D8D8" stroke-width="1">
<path d="M283.2 293.8 L413 264.3 L541.8 293.5 L535.3 461.8 L413.2 517.5 L291 461.8 Z"/>
</g>
</g>
<!-- lines drawn over dice where visible -->
<line x1="480" y1="402.3" x2="763" y2="496.8" stroke="#0A0ACF" stroke-width="1.7"/>
<line x1="63" y1="496.2" x2="346.5" y2="402" stroke="#E01A1E" stroke-width="1.4"/>
<!-- gizmo -->
<g stroke-width="1.9" fill="none">
<path d="M727.6 590.5 L727.6 575.5" stroke="#00C800"/>
<path d="M724.5 563.5 L729.3 570 L734 563.5 M729.3 570 L729.3 576" stroke="#00C800"/>
<path d="M727.6 590.5 L745.2 584.7" stroke="#E00000"/>
<path d="M742 581.5 L751.5 593 M751.5 581.5 L742 593" stroke="#E00000"/>
<path d="M727.6 590.5 L744.3 596.6" stroke="#0000E0"/>
<path d="M742 593.2 L751 593.2 L742 604.8 L751 604.8" stroke="#0000E0"/>
</g>
</svg>
</div>

<div class="a" style="left:766px;top:84px;width:1px;height:545px;background:#E4E4EA"></div>
<div class="t ui" style="left:773.2px;top:87.5px">Solution Explorer</div>
<svg style="left:868px;top:91.3px" width="96" height="5" viewBox="0 0 96 5"><defs><pattern id="dg" width="4" height="4" patternUnits="userSpaceOnUse"><rect x="0" y="0" width="1" height="1" fill="#A9A9B0"/><rect x="2" y="2" width="1" height="1" fill="#A9A9B0"/></pattern></defs><rect width="96" height="5" fill="url(#dg)"/></svg>
<svg style="left:971.50px;top:91.00px" width="8" height="5" viewBox="0 0 8 5"><path d="M0 0 L8 0 L4 4.5 Z" fill="#1E1E1E"/></svg>
<svg style="left:987.00px;top:88.50px" width="8" height="11" viewBox="0 0 8 11"><path d="M2 0.5 L6 0.5 L6 6 L7.5 6 L7.5 7.3 L0.5 7.3 L0.5 6 L2 6 Z M3.7 7.3 L3.7 10.8" fill="#1E1E1E" stroke="#1E1E1E" stroke-width="1"/><rect x="3" y="1.5" width="1.2" height="4.5" fill="#EEEEF2"/></svg>
<svg style="left:1002.50px;top:89.00px" width="10" height="8" viewBox="0 0 10 8"><path d="M0.7 0.3 L9.3 7.7 M9.3 0.3 L0.7 7.7" stroke="#1E1E1E" stroke-width="1.5"/></svg>
<svg style="left:777.50px;top:111.50px" width="13" height="13" viewBox="0 0 13 13"><circle cx="6.5" cy="6.5" r="6" fill="#C4C4C6"/><path d="M10 6.5 L3.5 6.5 M6 3.8 L3.2 6.5 L6 9.2" stroke="#EEEEF2" stroke-width="1.7" fill="none"/></svg>
<svg style="left:799.00px;top:111.50px" width="13" height="13" viewBox="0 0 13 13"><circle cx="6.5" cy="6.5" r="6" fill="#C4C4C6"/><path d="M3 6.5 L9.5 6.5 M7 3.8 L9.8 6.5 L7 9.2" stroke="#EEEEF2" stroke-width="1.7" fill="none"/></svg>
<svg style="left:820.00px;top:110.50px" width="14" height="14" viewBox="0 0 14 14"><path d="M1 7 L7 1.5 L13 7 M2.8 5.5 L2.8 13 L11.2 13 L11.2 5.5" fill="none" stroke="#1E1E1E" stroke-width="1.6"/><rect x="5.6" y="8.5" width="2.8" height="4.5" fill="#1E1E1E"/></svg>
<div class="sep" style="left:842px;top:108px;height:19px"></div>
<svg style="left:851.50px;top:110.00px" width="26" height="15" viewBox="0 0 26 15"><path d="M0.5 1 L4 1 M2.2 1 L2.2 4" stroke="#1E1E1E" stroke-width="1.2"/><circle cx="7.5" cy="8.5" r="5" fill="none" stroke="#1E1E1E" stroke-width="1.8"/><path d="M7.5 5.5 L7.5 8.8 L9.8 8.8" stroke="#1E1E1E" stroke-width="1.4" fill="none"/><path d="M20.2 6.5 L25.2 6.5 L22.7 9.5Z" fill="#717171"/></svg>
<svg style="left:884.50px;top:111.50px" width="12" height="12" viewBox="0 0 12 12"><path d="M1 3.5 L9.5 3.5 M7.5 1 L10.5 3.5 L7.5 6 M11 8.5 L2.5 8.5 M4.5 6 L1.5 8.5 L4.5 11" stroke="#1E1E1E" stroke-width="1.7" fill="none"/></svg>
<svg style="left:905.50px;top:110.50px" width="14" height="14" viewBox="0 0 14 14"><rect x="4" y="0.8" width="9" height="8" fill="none" stroke="#1E1E1E" stroke-width="1.5"/><rect x="1" y="4.8" width="9" height="8.5" fill="#EEEEF2" stroke="#1E1E1E" stroke-width="1.5"/><rect x="3" y="8" width="5" height="1.5" fill="#1E1E1E"/></svg>
<svg style="left:926.70px;top:110.00px" width="14" height="15" viewBox="0 0 14 15"><path d="M1 1 L8 1 M1 1 L1 10" stroke="#777" stroke-width="1" stroke-dasharray="1 1"/><path d="M4 4 L10 4 L13 7 L13 14 L4 14 Z" fill="none" stroke="#1E1E1E" stroke-width="1.4"/><path d="M6 8 L11 8 M6 10 L11 10 M6 12 L11 12" stroke="#1E1E1E" stroke-width="1"/></svg>
<div class="sep" style="left:947.5px;top:108px;height:19px"></div>
<svg style="left:958.00px;top:111.50px" width="12" height="12" viewBox="0 0 12 12"><path d="M1.5 10.5 L6 6" stroke="#2D2D30" stroke-width="2.8" stroke-linecap="round"/><circle cx="8" cy="4" r="3.4" fill="#2D2D30"/><path d="M8 4 L12 0" stroke="#EEEEF2" stroke-width="2.2"/></svg>
<div class="a" style="left:974px;top:106.5px;width:21.5px;height:23px;border:1px solid #3399FF;background:#F5F5F5"></div>
<svg style="left:978.00px;top:111.00px" width="14" height="13" viewBox="0 0 14 13"><path d="M1 9 L1 1 L6 1 L7.5 2.5 L13 2.5 L13 10.8 L7 10.8" fill="none" stroke="#2D2D30" stroke-width="1.5"/><circle cx="5.5" cy="9.3" r="2.3" fill="none" stroke="#1C6FC4" stroke-width="1.3"/><path d="M3.8 11 L1.5 13" stroke="#1C6FC4" stroke-width="1.4"/></svg>
<div class="a" style="left:769px;top:131.5px;width:249px;height:20.5px;background:#FCFCFC"></div>
<div class="t ui" style="left:774px;top:136.5px;color:#717171">Search Solution Explorer (Ctrl+;)</div>
<svg style="left:992.00px;top:135.00px" width="22" height="13" viewBox="0 0 22 13"><circle cx="8.2" cy="4.8" r="3.4" fill="none" stroke="#5A5A5A" stroke-width="1.7"/><path d="M6 7 L1.8 11.3" stroke="#5A5A5A" stroke-width="2.1" stroke-linecap="round"/><path d="M15 6 L20 6 L17.5 9Z" fill="#555"/></svg>
<div class="a" style="left:769px;top:152px;width:249px;height:179px;background:#F5F5F5"></div>
<div class="a" style="left:769.3px;top:192.30px;width:232.5px;height:18px;background:#CCCEDB"></div>
<div class="a" style="left:1001.8px;top:152px;width:16.2px;height:179px;background:#E8E8EC"></div>
<svg style="left:1004.50px;top:161.50px" width="10" height="6" viewBox="0 0 10 6"><path d="M0 5.5 L10 5.5 L5 0.5Z" fill="#868999"/></svg>
<div class="a" style="left:1006px;top:213.7px;width:8px;height:37px;background:#C2C3C9"></div>
<svg style="left:1004.50px;top:319.50px" width="10" height="6" viewBox="0 0 10 6"><path d="M0 0.5 L10 0.5 L5 5.5Z" fill="#868999"/></svg>
<svg style="left:796.80px;top:162.40px" width="7" height="7" viewBox="0 0 7 7"><path d="M6.5 0.5 L6.5 6.5 L0.5 6.5Z" fill="#1E1E1E"/></svg>
<svg style="left:815.00px;top:180.15px" width="7" height="7" viewBox="0 0 7 7"><path d="M6.5 0.5 L6.5 6.5 L0.5 6.5Z" fill="#1E1E1E"/></svg>
<svg style="left:817.00px;top:159.10px" width="14" height="14" viewBox="0 0 14 14"><path d="M6 1 L10 1 L13 3 L13 12.5 L10 12.5" fill="#fff" stroke="#2D2D30" stroke-width="1.2"/><path d="M2 5 L10 5 L10 12.5 L2 12.5 Z" fill="#2D2D30"/><path d="M0.5 8 L6 8 M3 8 L3 13.5" stroke="#2D2D30" stroke-width="1.2"/></svg>
<svg style="left:834.50px;top:176.85px" width="14" height="14" viewBox="0 0 14 14"><path d="M6 1 L10 1 L13 3 L13 12.5 L10 12.5" fill="#fff" stroke="#2D2D30" stroke-width="1.2"/><path d="M2 5 L10 5 L10 12.5 L2 12.5 Z" fill="#2D2D30"/><path d="M0.5 8 L6 8 M3 8 L3 13.5" stroke="#2D2D30" stroke-width="1.2"/></svg>
<svg style="left:852.00px;top:195.10px" width="14" height="13" viewBox="0 0 14 13"><rect x="0.8" y="0.8" width="12.4" height="11.4" fill="#fff" stroke="#2D2D30" stroke-width="1.4"/><path d="M2.5 10 L6 6 L8 8 L9.5 6.5 L11.5 9" fill="none" stroke="#2D2D30" stroke-width="1.2"/><circle cx="9.5" cy="3.8" r="1.2" fill="#2D2D30"/></svg>
<div class="t ui" style="left:836.8px;top:160.40px">Shared</div>
<div class="t ui" style="left:854.3px;top:178.15px">Assets</div>
<div class="t ui" style="left:871.8px;top:195.90px">DieTexture.png</div>
<div class="t ui" style="left:854.3px;top:213.65px">BasicTimer.h</div>
<div class="t ui" style="left:854.3px;top:231.40px">DDSTextureLoader.cpp</div>
<div class="t ui" style="left:854.3px;top:249.15px">DDSTextureLoader.h</div>
<div class="t ui" style="left:854.3px;top:266.90px">Direct3DBase.cpp</div>
<div class="t ui" style="left:854.3px;top:284.65px">Direct3DBase.h</div>
<div class="t ui" style="left:854.3px;top:302.40px">DirectXHelper.h</div>
<div class="t ui" style="left:854.3px;top:320.15px">Game.cpp</div>
<svg style="left:815.00px;top:214.35px" width="6" height="9" viewBox="0 0 6 9"><path d="M0.7 0.7 L5.3 4.5 L0.7 8.3 Z" fill="none" stroke="#1E1E1E" stroke-width="1.2"/></svg>
<svg style="left:838.00px;top:213.85px" width="9" height="10" viewBox="0 0 9 10"><path d="M0.6 0.6 L6 0.6 L8.4 3 L8.4 9.4 L0.6 9.4 Z" fill="#fff" stroke="#7A5C86" stroke-width="1"/><path d="M3 3 L3 8 M3 5.5 L5.8 5.5 M5.8 4.5 L5.8 8" stroke="#7A3C86" stroke-width="1"/></svg>
<svg style="left:815.00px;top:232.10px" width="6" height="9" viewBox="0 0 6 9"><path d="M0.7 0.7 L5.3 4.5 L0.7 8.3 Z" fill="none" stroke="#1E1E1E" stroke-width="1.2"/></svg>
<svg style="left:835.50px;top:232.10px" width="13" height="9" viewBox="0 0 13 9"><path d="M0.5 3.5 L5.5 3.5 M3 1 L3 6 M7 5.5 L12.5 5.5 M9.75 3 L9.75 8" stroke="#9B4F96" stroke-width="1.8"/></svg>
<svg style="left:815.00px;top:249.85px" width="6" height="9" viewBox="0 0 6 9"><path d="M0.7 0.7 L5.3 4.5 L0.7 8.3 Z" fill="none" stroke="#1E1E1E" stroke-width="1.2"/></svg>
<svg style="left:838.00px;top:249.35px" width="9" height="10" viewBox="0 0 9 10"><path d="M0.6 0.6 L6 0.6 L8.4 3 L8.4 9.4 L0.6 9.4 Z" fill="#fff" stroke="#7A5C86" stroke-width="1"/><path d="M3 3 L3 8 M3 5.5 L5.8 5.5 M5.8 4.5 L5.8 8" stroke="#7A3C86" stroke-width="1"/></svg>
<svg style="left:815.00px;top:267.60px" width="6" height="9" viewBox="0 0 6 9"><path d="M0.7 0.7 L5.3 4.5 L0.7 8.3 Z" fill="none" stroke="#1E1E1E" stroke-width="1.2"/></svg>
<svg style="left:835.50px;top:267.60px" width="13" height="9" viewBox="0 0 13 9"><path d="M0.5 3.5 L5.5 3.5 M3 1 L3 6 M7 5.5 L12.5 5.5 M9.75 3 L9.75 8" stroke="#9B4F96" stroke-width="1.8"/></svg>
<svg style="left:815.00px;top:285.35px" width="6" height="9" viewBox="0 0 6 9"><path d="M0.7 0.7 L5.3 4.5 L0.7 8.3 Z" fill="none" stroke="#1E1E1E" stroke-width="1.2"/></svg>
<svg style="left:838.00px;top:284.85px" width="9" height="10" viewBox="0 0 9 10"><path d="M0.6 0.6 L6 0.6 L8.4 3 L8.4 9.4 L0.6 9.4 Z" fill="#fff" stroke="#7A5C86" stroke-width="1"/><path d="M3 3 L3 8 M3 5.5 L5.8 5.5 M5.8 4.5 L5.8 8" stroke="#7A3C86" stroke-width="1"/></svg>
<svg style="left:815.00px;top:303.10px" width="6" height="9" viewBox="0 0 6 9"><path d="M0.7 0.7 L5.3 4.5 L0.7 8.3 Z" fill="none" stroke="#1E1E1E" stroke-width="1.2"/></svg>
<svg style="left:838.00px;top:302.60px" width="9" height="10" viewBox="0 0 9 10"><path d="M0.6 0.6 L6 0.6 L8.4 3 L8.4 9.4 L0.6 9.4 Z" fill="#fff" stroke="#7A5C86" stroke-width="1"/><path d="M3 3 L3 8 M3 5.5 L5.8 5.5 M5.8 4.5 L5.8 8" stroke="#7A3C86" stroke-width="1"/></svg>
<svg style="left:815.00px;top:320.85px" width="6" height="9" viewBox="0 0 6 9"><path d="M0.7 0.7 L5.3 4.5 L0.7 8.3 Z" fill="none" stroke="#1E1E1E" stroke-width="1.2"/></svg>
<svg style="left:835.50px;top:320.85px" width="13" height="9" viewBox="0 0 13 9"><path d="M0.5 3.5 L5.5 3.5 M3 1 L3 6 M7 5.5 L12.5 5.5 M9.75 3 L9.75 8" stroke="#9B4F96" stroke-width="1.8"/></svg>
<div class="a" style="left:769px;top:331px;width:96px;height:19px;background:#F5F5F5"></div>
<div class="a" style="left:865.5px;top:331px;width:1px;height:19px;background:#CCCEDB"></div>
<div class="a" style="left:948.5px;top:331px;width:1px;height:19px;background:#CCCEDB"></div>
<div class="t ui" style="left:774.3px;top:334.5px;color:#0E70C0">Solution Explorer</div>
<div class="t ui" style="left:871.8px;top:334.5px">Team Explorer</div>
<div class="t ui" style="left:955px;top:334.5px">Class View</div>
<div class="a" style="left:769px;top:350px;width:249px;height:6px;background:#CCCEDB"></div>
<div class="a" style="left:769px;top:356px;width:249px;height:20.8px;background:#007ACC"></div>
<div class="t ui" style="left:773.5px;top:360.5px;color:#fff">Properties</div>
<svg style="left:832.5px;top:364px" width="131" height="5" viewBox="0 0 131 5"><defs><pattern id="dw" width="4" height="4" patternUnits="userSpaceOnUse"><rect x="0" y="0" width="1" height="1" fill="#8CC4EA"/><rect x="2" y="2" width="1" height="1" fill="#8CC4EA"/></pattern></defs><rect width="131" height="5" fill="url(#dw)"/></svg>
<svg style="left:971.50px;top:364.00px" width="8" height="5" viewBox="0 0 8 5"><path d="M0 0 L8 0 L4 4.5 Z" fill="#fff"/></svg>
<svg style="left:988.00px;top:361.00px" width="8" height="11" viewBox="0 0 8 11"><path d="M2 0.5 L6 0.5 L6 6 L7.5 6 L7.5 7.3 L0.5 7.3 L0.5 6 L2 6 Z M3.7 7.3 L3.7 10.8" fill="#fff" stroke="#fff" stroke-width="1"/><rect x="3" y="1.5" width="1.2" height="4.5" fill="#007ACC"/></svg>
<svg style="left:1003.00px;top:362.50px" width="9" height="8" viewBox="0 0 9 8"><path d="M0.5 0.3 L8.5 7.7 M8.5 0.3 L0.5 7.7" stroke="#fff" stroke-width="1.5"/></svg>
<div class="a" style="left:769px;top:376.8px;width:249px;height:25.5px;background:#F5F5F5"></div>
<div class="a" style="left:771px;top:379.5px;width:22px;height:20.5px;background:#C9DEF5;border:1px solid #3399FF"></div>
<svg style="left:774.00px;top:382.00px" width="16" height="15" viewBox="0 0 16 15"><rect x="0.5" y="0.5" width="5" height="5" fill="#fff" stroke="#1E1E1E" stroke-width="1"/><rect x="0.5" y="8.5" width="5" height="5" fill="#fff" stroke="#1E1E1E" stroke-width="1"/><rect x="2" y="2" width="2" height="2" fill="#1E1E1E"/><rect x="2" y="10" width="2" height="2" fill="#1E1E1E"/><path d="M8 2 L14 2 M8 5 L14 5 M8 8 L14 8 M8 11 L14 11 M8 14 L14 14" stroke="#9AA" stroke-width="1"/></svg>
<svg style="left:796.50px;top:381.00px" width="16" height="16" viewBox="0 0 16 16"><path d="M0.8 7 L3 0.8 L5.2 7 M1.6 5 L4.4 5" stroke="#3B5EC6" stroke-width="1.2" fill="none"/><path d="M0.8 9 L5.2 9 L0.8 15 L5.2 15" stroke="#B03030" stroke-width="1.2" fill="none"/><path d="M10 1 L10 14 M7.8 11.5 L10 14.5 L12.2 11.5" stroke="#1E1E1E" stroke-width="1.4" fill="none"/></svg>
<div class="a" style="left:818.3px;top:380px;width:1px;height:20px;background:#505050"></div>
<svg style="left:825.00px;top:382.00px" width="16" height="15" viewBox="0 0 16 15"><rect x="0.5" y="0.5" width="15" height="14" fill="#D8D8DA" stroke="#BDBDC0"/><path d="M3 3.5 L10 3.5 L10 12 L3 12Z M5 6 L13 6 L13 12" fill="none" stroke="#F5F5F5" stroke-width="1"/></svg>
<div class="a" style="left:769px;top:402.3px;width:249px;height:186px;background:#F5F5F5"></div>
<div class="a" style="left:1001px;top:402.3px;width:16.5px;height:185.5px;background:#E8E8EC"></div>
<svg style="left:1003.50px;top:409.00px" width="10" height="6" viewBox="0 0 10 6"><path d="M0 5.5 L10 5.5 L5 0.5Z" fill="#868999"/></svg>
<div class="a" style="left:1004.7px;top:447.5px;width:8.5px;height:61px;background:#C2C3C9"></div>
<svg style="left:1003.50px;top:576.50px" width="10" height="6" viewBox="0 0 10 6"><path d="M0 0.5 L10 0.5 L5 5.5Z" fill="#868999"/></svg>
<div class="a" style="left:769px;top:402.3px;width:232px;height:20.4px;background:#EEEEF2"></div>
<svg style="left:771.80px;top:408.00px" width="9" height="9" viewBox="0 0 9 9"><rect x="0.5" y="0.5" width="8" height="8" fill="#fff" stroke="#1E1E1E" stroke-width="1"/><path d="M2 4.5 L7 4.5" stroke="#1E1E1E" stroke-width="1"/></svg>
<div class="t ui" style="left:788px;top:407.2px;font-weight:bold;font-size:11.3px">Phong: Phong[16]</div>
<div class="a" style="left:769px;top:422.7px;width:14.5px;height:18.6px;background:#EEEEF2"></div>
<div class="a" style="left:783.5px;top:440.3px;width:217.5px;height:1px;background:#EDEDEF"></div>
<div class="a" style="left:876.3px;top:422.7px;width:1px;height:18.6px;background:#E6E6EA"></div>
<svg style="left:771.80px;top:427.50px" width="9" height="9" viewBox="0 0 9 9"><rect x="0.5" y="0.5" width="8" height="8" fill="#fff" stroke="#1E1E1E" stroke-width="1"/><path d="M2 4.5 L7 4.5 M4.5 2 L4.5 7" stroke="#1E1E1E" stroke-width="1"/></svg>
<div class="t ui" style="left:788px;top:426.7px;color:#1E1E1E">Effect</div>
<div class="t ui" style="left:880.5px;top:426.7px;">Phong</div>
<div class="a" style="left:769px;top:441.3px;width:14.5px;height:18.6px;background:#EEEEF2"></div>
<div class="a" style="left:783.5px;top:458.9px;width:217.5px;height:1px;background:#EDEDEF"></div>
<div class="a" style="left:876.3px;top:441.3px;width:1px;height:18.6px;background:#E6E6EA"></div>
<svg style="left:771.80px;top:446.10px" width="9" height="9" viewBox="0 0 9 9"><rect x="0.5" y="0.5" width="8" height="8" fill="#fff" stroke="#1E1E1E" stroke-width="1"/><path d="M2 4.5 L7 4.5 M4.5 2 L4.5 7" stroke="#1E1E1E" stroke-width="1"/></svg>
<div class="t ui" style="left:788px;top:445.3px;color:#1E1E1E">MaterialAmbient</div>
<div class="t ui" style="left:880.5px;top:445.3px;letter-spacing:-0.45px;">1.00; 1.00; 1.00; 1.00</div>
<div class="a" style="left:769px;top:459.9px;width:14.5px;height:18.6px;background:#EEEEF2"></div>
<div class="a" style="left:783.5px;top:477.5px;width:217.5px;height:1px;background:#EDEDEF"></div>
<div class="a" style="left:876.3px;top:459.9px;width:1px;height:18.6px;background:#E6E6EA"></div>
<svg style="left:771.80px;top:464.70px" width="9" height="9" viewBox="0 0 9 9"><rect x="0.5" y="0.5" width="8" height="8" fill="#fff" stroke="#1E1E1E" stroke-width="1"/><path d="M2 4.5 L7 4.5 M4.5 2 L4.5 7" stroke="#1E1E1E" stroke-width="1"/></svg>
<div class="t ui" style="left:788px;top:463.9px;color:#1E1E1E">MaterialDiffuse</div>
<div class="t ui" style="left:880.5px;top:463.9px;letter-spacing:-0.45px;">1.00; 1.00; 1.00; 1.00</div>
<div class="a" style="left:769px;top:478.5px;width:14.5px;height:18.6px;background:#EEEEF2"></div>
<div class="a" style="left:783.5px;top:496.1px;width:217.5px;height:1px;background:#EDEDEF"></div>
<div class="a" style="left:876.3px;top:478.5px;width:1px;height:18.6px;background:#E6E6EA"></div>
<svg style="left:771.80px;top:483.30px" width="9" height="9" viewBox="0 0 9 9"><rect x="0.5" y="0.5" width="8" height="8" fill="#fff" stroke="#1E1E1E" stroke-width="1"/><path d="M2 4.5 L7 4.5 M4.5 2 L4.5 7" stroke="#1E1E1E" stroke-width="1"/></svg>
<div class="t ui" style="left:788px;top:482.5px;color:#1E1E1E">MaterialSpecular</div>
<div class="t ui" style="left:880.5px;top:482.5px;letter-spacing:-0.45px;">0.00; 0.00; 0.00; 0.00</div>
<div class="a" style="left:769px;top:497.1px;width:14.5px;height:18.6px;background:#EEEEF2"></div>
<div class="a" style="left:783.5px;top:514.7px;width:217.5px;height:1px;background:#EDEDEF"></div>
<div class="a" style="left:876.3px;top:497.1px;width:1px;height:18.6px;background:#E6E6EA"></div>
<div class="t ui" style="left:788px;top:501.1px;color:#1E1E1E">MaterialSpecular</div>
<div class="t ui" style="left:880.5px;top:501.1px;">1</div>
<div class="a" style="left:769px;top:515.7px;width:14.5px;height:18.6px;background:#EEEEF2"></div>
<div class="a" style="left:783.5px;top:533.3px;width:217.5px;height:1px;background:#EDEDEF"></div>
<div class="a" style="left:876.3px;top:515.7px;width:1px;height:18.6px;background:#E6E6EA"></div>
<div class="t ui" style="left:788px;top:519.7px;color:#1E1E1E">Name</div>
<div class="a" style="left:769px;top:534.3px;width:14.5px;height:18.6px;background:#EEEEF2"></div>
<div class="a" style="left:783.5px;top:551.9px;width:217.5px;height:1px;background:#EDEDEF"></div>
<div class="a" style="left:876.3px;top:534.3px;width:1px;height:18.6px;background:#E6E6EA"></div>
<div class="a" style="left:783.5px;top:534.8px;width:92.5px;height:17.6px;background:#3399FF"></div>
<div class="t ui" style="left:788px;top:538.3px;color:#fff">Texture1</div>
<div class="a" style="left:769px;top:552.9px;width:232px;height:18.6px;background:#EEEEF2"></div>
<svg style="left:771.80px;top:557.70px" width="9" height="9" viewBox="0 0 9 9"><rect x="0.5" y="0.5" width="8" height="8" fill="#fff" stroke="#1E1E1E" stroke-width="1"/><path d="M2 4.5 L7 4.5" stroke="#1E1E1E" stroke-width="1"/></svg>
<div class="t ui" style="left:788px;top:556.9px;font-weight:bold;font-size:11.3px">Scene Node: Cube_Node</div>
<div class="a" style="left:769px;top:571.5px;width:14.5px;height:18.6px;background:#EEEEF2"></div>
<div class="a" style="left:783.5px;top:589.1px;width:217.5px;height:1px;background:#EDEDEF"></div>
<div class="a" style="left:876.3px;top:571.5px;width:1px;height:18.6px;background:#E6E6EA"></div>
<div class="t ui" style="left:788px;top:575.5px;color:#1E1E1E">Name</div>
<div class="t ui" style="left:880.5px;top:575.5px;">Cube_Node</div>
<div class="a" style="left:881px;top:538px;width:101px;height:10px;background:#D3D3D5;filter:blur(1.5px)"></div>
<div class="a" style="left:985px;top:536px;width:14px;height:15.5px;background:#F5F5F5;border:1px solid #C6C6CC"></div>
<div class="t" style="left:987.5px;top:539px;font-size:11px;font-weight:bold;letter-spacing:-0.5px">...</div>
<div class="a" style="left:769px;top:588.3px;width:249px;height:40.5px;background:#F5F5F5"></div>
<div class="a" style="left:773.5px;top:591.8px;width:238px;height:1px;background-image:linear-gradient(90deg,#A8A8AE 50%,transparent 50%);background-size:3.9px 1px"></div>
<div class="a" style="left:739.8px;top:508.7px;width:172.8px;height:69.4px;border:7.4px solid #FF0A24;border-radius:17px"></div>
<!-- BOTTOM TABS -->
<div class="t ui" style="left:31px;top:637.8px">Error List</div>
<div class="t ui" style="left:87.5px;top:637.8px">Task List</div>
<div class="t ui" style="left:143.5px;top:637.8px">Output</div>
<div class="t ui" style="left:192.5px;top:637.8px">Find Results 1</div>
<div class="t ui" style="left:274.5px;top:637.8px">Find Symbol Results</div>
<div class="a" style="left:30px;top:654px;width:45.5px;height:5px;background:#CCCEDB"></div>
<div class="a" style="left:87px;top:654px;width:44px;height:5px;background:#CCCEDB"></div>
<div class="a" style="left:143px;top:654px;width:37px;height:5px;background:#CCCEDB"></div>
<div class="a" style="left:192px;top:654px;width:71px;height:5px;background:#CCCEDB"></div>
<div class="a" style="left:274px;top:654px;width:105px;height:5px;background:#CCCEDB"></div>

<!-- STATUS BAR -->
<div class="a" style="left:0;top:659px;width:1024px;height:23px;background:#007ACC"></div>
<div class="t ui" style="left:4.5px;top:665.8px;color:#fff">Ready</div>

<svg style="left:985px;top:661px" width="19" height="19" viewBox="0 0 19 19"><circle cx="9.4" cy="9.4" r="8.6" fill="#F0F0F0" stroke="#fff" stroke-width="1"/><circle cx="9.4" cy="9.4" r="7.6" fill="#ECECEC" stroke="#505050" stroke-width="1.3"/></svg>
<svg style="left:1011.5px;top:669.5px" width="8" height="8" viewBox="0 0 8 8"><g fill="#C8E0F2"><rect x="6" y="0" width="1.2" height="1.2"/><rect x="6" y="2.3" width="1.2" height="1.2"/><rect x="3.7" y="2.3" width="1.2" height="1.2"/><rect x="6" y="4.6" width="1.2" height="1.2"/><rect x="3.7" y="4.6" width="1.2" height="1.2"/><rect x="1.4" y="4.6" width="1.2" height="1.2"/><rect x="6" y="6.6" width="1.2" height="1.2"/><rect x="3.7" y="6.6" width="1.2" height="1.2"/><rect x="1.4" y="6.6" width="1.2" height="1.2"/><rect x="-0.8" y="6.6" width="1.2" height="1.2"/></g></svg>
</body></html>
